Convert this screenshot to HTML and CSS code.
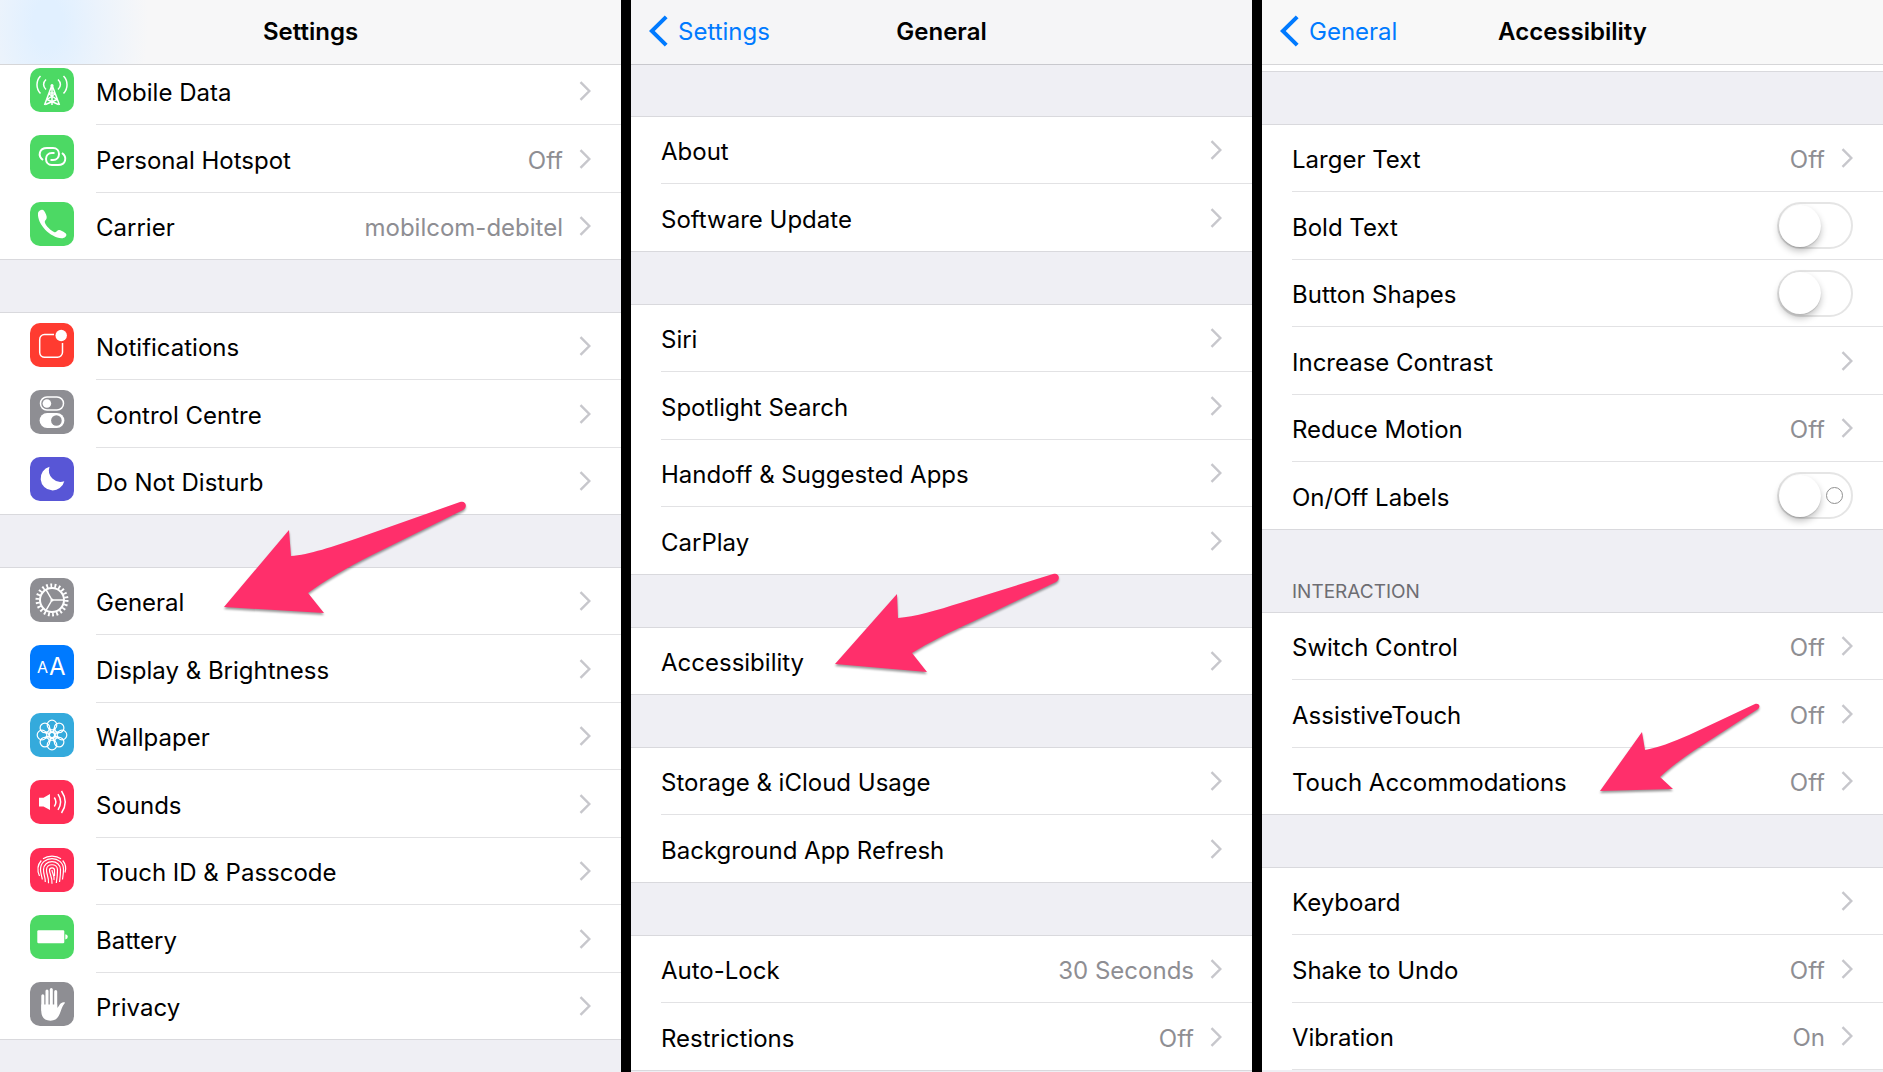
FILE: index.html
```
<!DOCTYPE html>
<html lang="en">
<head>
    <meta charset="utf-8">
    <meta name="viewport" content="width=device-width, initial-scale=1">
    <link rel="stylesheet" href="styles.css">
    <title>Settings</title>
</head>
<body>
    <svg class="defs" aria-hidden="true">
        <symbol id="chevron" viewBox="0 0 12 20"><path d="M1.5 1.2 10.3 10 1.5 18.8" fill="none" stroke="currentColor" stroke-width="2.4"/></symbol>
        <symbol id="back" viewBox="0 0 19 32"><path d="M17.2 1.8 2.8 16 17.2 30.2" fill="none" stroke="currentColor" stroke-width="4"/></symbol>
    </svg>
    <main class="screens">
        <!-- Settings -->
        <section class="screen">
            <header class="bar bar-tint">
                <h1>Settings</h1>
            </header>
            <div class="list scrolled">
                <div class="group">
                    <a class="row" href="#">
                        <svg class="icon green" viewBox="0 0 44 44">
                            <g class="line">
                                <path d="M10.5 8C5.8 13 5.8 20.5 10.5 25.5M16 11.5C12.8 14.5 12.8 18.5 16 21.5M33.5 8C38.2 13 38.2 20.5 33.5 25.5M28 11.5C31.2 14.5 31.2 18.5 28 21.5"/>
                                <path d="M22 17 14.5 37M22 17 29.5 37M22 17V37M19.5 25H24.5M19 26 27 31.5 15.5 36.5M25 26 17 31.5 28.5 36.5"/>
                            </g>
                            <circle class="solid" cx="22" cy="17.5" r="1.5"/>
                        </svg>
                        <span class="body"><span class="label">Mobile Data</span><svg class="chevron"><use href="#chevron"/></svg></span>
                    </a>
                    <a class="row" href="#">
                        <svg class="icon green" viewBox="0 0 44 44">
                            <g class="line thick">
                                <path d="M13 25C7.5 21 9 13 17 13H23C31 13 31 25 23 25H20.5"/>
                                <path d="M32 18C37.500 22 36 30 28 30H22C14 30 14 18 22 18H24.5"/>
                            </g>
                        </svg>
                        <span class="body"><span class="label">Personal Hotspot</span><span class="value">Off</span><svg class="chevron"><use href="#chevron"/></svg></span>
                    </a>
                    <a class="row" href="#">
                        <svg class="icon green" viewBox="0 0 44 44">
                            <path class="solid" d="M8 11C8.500 8.500 12.500 6.500 14 8.800 15.500 11 17 14 16.700 16 16.400 17.800 14.400 18.500 14.800 20.200 15.800 23.800 21 28.800 24.500 30.200 26.300 30.800 26.800 28.200 28.700 28 30.500 28 34.500 30 36 31.800 37.500 34 34.500 36.500 31.500 36.300 20.500 35.500 7 22.500 8 11Z"/>
                        </svg>
                        <span class="body"><span class="label">Carrier</span><span class="value">mobilcom-debitel</span><svg class="chevron"><use href="#chevron"/></svg></span>
                    </a>
                </div>
                <div class="group">
                    <a class="row" href="#">
                        <svg class="icon red" viewBox="0 0 44 44">
                            <path class="line" d="M24 11.5H14.500A5 5 0 0 0 9.700 16.500V29.500A5 5 0 0 0 14.700 34.300H27.500A5 5 0 0 0 32.500 29.300V20"/>
                            <circle class="solid" cx="31.2" cy="12.5" r="5.7"/>
                        </svg>
                        <span class="body"><span class="label">Notifications</span><svg class="chevron"><use href="#chevron"/></svg></span>
                    </a>
                    <a class="row" href="#">
                        <svg class="icon gray" viewBox="0 0 44 44">
                            <rect class="line" x="10.5" y="7" width="23" height="13" rx="6.5"/>
                            <circle class="solid" cx="16.9" cy="13.5" r="4.3"/>
                            <rect class="solid" x="9.6" y="23" width="24.8" height="15" rx="7.5"/>
                            <circle class="hole" cx="26.4" cy="30.5" r="5.3"/>
                        </svg>
                        <span class="body"><span class="label">Control Centre</span><svg class="chevron"><use href="#chevron"/></svg></span>
                    </a>
                    <a class="row" href="#">
                        <svg class="icon purple" viewBox="0 0 44 44">
                            <path class="solid" d="M19.5 9.8A12 12 0 1 0 34.3 24.2 11.5 11.5 0 0 1 19.5 9.8Z"/>
                        </svg>
                        <span class="body"><span class="label">Do Not Disturb</span><svg class="chevron"><use href="#chevron"/></svg></span>
                    </a>
                </div>
                <div class="group">
                    <a class="row" href="#">
                        <svg class="icon gray" viewBox="0 0 44 44">
                            <circle cx="22" cy="22" r="14.5" fill="none" stroke="#fff" stroke-width="4" stroke-dasharray="1.8 2.341"/>
                            <circle class="line thick" cx="22" cy="22" r="12"/>
                            <path class="line" d="M22 22H34M22 22 16 11.6M22 22 16 32.4"/>
                            <circle class="solid" cx="22" cy="22" r="1.6"/>
                        </svg>
                        <span class="body"><span class="label">General</span><svg class="chevron"><use href="#chevron"/></svg></span>
                        <svg class="arrow arrow-general" viewBox="0 0 250 125">
                            <path d="M4 112 69 35 71 61C88 60 115 51 138 43L240 7C246 5 248 12 243 15L150 61C128 72 104 86 88 98L104 118Z"/>
                        </svg>
                    </a>
                    <a class="row" href="#">
                        <svg class="icon blue" viewBox="0 0 44 44">
                            <text x="7" y="28" font-size="16">A</text>
                            <text x="19" y="30" font-size="24">A</text>
                        </svg>
                        <span class="body"><span class="label">Display &amp; Brightness</span><svg class="chevron"><use href="#chevron"/></svg></span>
                    </a>
                    <a class="row" href="#">
                        <svg class="icon sky" viewBox="0 0 44 44">
                            <g class="line thin">
                                <circle cx="22" cy="12" r="4.8"/><circle cx="29.1" cy="14.9" r="4.8"/>
                                <circle cx="32" cy="22" r="4.8"/><circle cx="29.1" cy="29.1" r="4.8"/>
                                <circle cx="22" cy="32" r="4.8"/><circle cx="14.9" cy="29.1" r="4.8"/>
                                <circle cx="12" cy="22" r="4.8"/><circle cx="14.9" cy="14.9" r="4.8"/>
                                <circle cx="22" cy="22" r="2.6"/>
                                <path d="M22 19.4 18.5 15.5M22 19.4 25.5 15.5M23.8 20.2 24.2 15M23.8 20.2 29 19.8M24.6 22 28.5 18.5M24.6 22 28.5 25.5M23.8 23.8 29 24.2M23.8 23.8 24.2 29M22 24.6 25.5 28.5M22 24.6 18.5 28.5M20.2 23.8 19.8 29M20.2 23.8 15 24.2M19.4 22 15.5 25.5M19.4 22 15.5 18.5M20.2 20.2 15 19.8M20.2 20.2 19.8 15"/>
                            </g>
                        </svg>
                        <span class="body"><span class="label">Wallpaper</span><svg class="chevron"><use href="#chevron"/></svg></span>
                    </a>
                    <a class="row" href="#">
                        <svg class="icon pink" viewBox="0 0 44 44">
                            <path class="solid" d="M9 17.8H13.5L20 14V30L13.5 26.5H9Z"/>
                            <path class="line" d="M24.3 17.5Q27.5 22 24.3 26.5M28 14.2Q33.2 22 28 29.8M31.5 11Q39 22 31.5 33"/>
                        </svg>
                        <span class="body"><span class="label">Sounds</span><svg class="chevron"><use href="#chevron"/></svg></span>
                    </a>
                    <a class="row" href="#">
                        <svg class="icon pink" viewBox="0 0 44 44">
                            <g class="line thin">
                                <path d="M13 10.8C18 7.3 26 7.3 31 10.8"/>
                                <path d="M9.5 28C6.800 22 7.8 16.5 11.3 12.5M32.7 12.5C36 16.5 36.5 20 35 24.5"/>
                                <path d="M12.3 31.5C12 28 10.5 26 10.5 21.5 10.5 7 33.5 7 33.5 21.5 33.5 26 32.7 29 32.5 31.5"/>
                                <path d="M15.3 34C15.5 29 13.5 27 13.5 21.8 13.5 11 30.5 11 30.5 21.8 30.5 27 30 30 29.5 34"/>
                                <path d="M18.5 35.3C19 29 16.5 27 16.5 22 16.5 15 27.5 15 27.5 22 27.5 27 27 31 26.3 35"/>
                                <path d="M22 35.8C22.5 29 19.5 26 19.5 22.2 19.5 19 24.5 19 24.5 22.2V28"/>
                                <path d="M22 22C22 25 25 28 24 32"/>
                            </g>
                        </svg>
                        <span class="body"><span class="label">Touch ID &amp; Passcode</span><svg class="chevron"><use href="#chevron"/></svg></span>
                    </a>
                    <a class="row" href="#">
                        <svg class="icon green" viewBox="0 0 44 44">
                            <rect class="solid" x="7.3" y="15.3" width="27" height="13" rx="1.2"/>
                            <path class="solid" d="M35.3 19.2Q37.8 19.5 37.8 21.8T35.3 24.4Z"/>
                        </svg>
                        <span class="body"><span class="label">Battery</span><svg class="chevron"><use href="#chevron"/></svg></span>
                    </a>
                    <a class="row" href="#">
                        <svg class="icon gray" viewBox="0 0 44 44">
                            <path d="M12.8 13.8V28M17 9V26M21.3 7.5V26M25.7 9.4V26" fill="none" stroke="#fff" stroke-width="3" stroke-linecap="round"/>
                            <path class="solid" d="M11.3 22.5H27.2V25.8C28.5 25.5 29 22.5 31 21.2 32.5 20.2 34.5 20 35 20.8 34 22.5 32.5 24 31.5 27 29.5 33 27.5 38.7 20.5 38.7 14 38.7 11.3 34.5 11.3 29Z"/>
                        </svg>
                        <span class="body"><span class="label">Privacy</span><svg class="chevron"><use href="#chevron"/></svg></span>
                    </a>
                </div>
            </div>
        </section>

        <!-- General -->
        <section class="screen">
            <header class="bar bar-plain">
                <a class="back" href="#"><svg><use href="#back"/></svg><span>Settings</span></a>
                <h1>General</h1>
            </header>
            <div class="list spaced">
                <div class="group">
                    <a class="row" href="#"><span class="body"><span class="label">About</span><svg class="chevron"><use href="#chevron"/></svg></span></a>
                    <a class="row" href="#"><span class="body"><span class="label">Software Update</span><svg class="chevron"><use href="#chevron"/></svg></span></a>
                </div>
                <div class="group">
                    <a class="row" href="#"><span class="body"><span class="label">Siri</span><svg class="chevron"><use href="#chevron"/></svg></span></a>
                    <a class="row" href="#"><span class="body"><span class="label">Spotlight Search</span><svg class="chevron"><use href="#chevron"/></svg></span></a>
                    <a class="row" href="#"><span class="body"><span class="label">Handoff &amp; Suggested Apps</span><svg class="chevron"><use href="#chevron"/></svg></span></a>
                    <a class="row" href="#"><span class="body"><span class="label">CarPlay</span><svg class="chevron"><use href="#chevron"/></svg></span></a>
                </div>
                <div class="group">
                    <a class="row" href="#">
                        <span class="body"><span class="label">Accessibility</span><svg class="chevron"><use href="#chevron"/></svg></span>
                        <svg class="arrow arrow-access" viewBox="0 0 235 110">
                            <path d="M5 94 67 24 68 48C84 47 108 40 130 33L223 4C229 2 231 9 226 12L142 52C120 62 98 73 82 83L97 102Z"/>
                        </svg>
                    </a>
                </div>
                <div class="group">
                    <a class="row" href="#"><span class="body"><span class="label">Storage &amp; iCloud Usage</span><svg class="chevron"><use href="#chevron"/></svg></span></a>
                    <a class="row" href="#"><span class="body"><span class="label">Background App Refresh</span><svg class="chevron"><use href="#chevron"/></svg></span></a>
                </div>
                <div class="group">
                    <a class="row" href="#"><span class="body"><span class="label">Auto-Lock</span><span class="value">30 Seconds</span><svg class="chevron"><use href="#chevron"/></svg></span></a>
                    <a class="row" href="#"><span class="body"><span class="label">Restrictions</span><span class="value">Off</span><svg class="chevron"><use href="#chevron"/></svg></span></a>
                </div>
            </div>
        </section>

        <!-- Accessibility -->
        <section class="screen">
            <header class="bar">
                <a class="back" href="#"><svg><use href="#back"/></svg><span>General</span></a>
                <h1>Accessibility</h1>
            </header>
            <div class="list">
                <div class="group-tail"></div>
                <div class="group">
                    <a class="row" href="#"><span class="body"><span class="label">Larger Text</span><span class="value">Off</span><svg class="chevron"><use href="#chevron"/></svg></span></a>
                    <div class="row"><div class="body"><label class="label" for="bold">Bold Text</label><input class="switch" type="checkbox" id="bold"></div></div>
                    <div class="row"><div class="body"><label class="label" for="shapes">Button Shapes</label><input class="switch" type="checkbox" id="shapes"></div></div>
                    <a class="row" href="#"><span class="body"><span class="label">Increase Contrast</span><svg class="chevron"><use href="#chevron"/></svg></span></a>
                    <a class="row" href="#"><span class="body"><span class="label">Reduce Motion</span><span class="value">Off</span><svg class="chevron"><use href="#chevron"/></svg></span></a>
                    <div class="row"><div class="body"><label class="label" for="labels">On/Off Labels</label><input class="switch switch-labelled" type="checkbox" id="labels"></div></div>
                </div>
                <div class="section">
                    <h2>INTERACTION</h2>
                    <div class="group">
                        <a class="row" href="#"><span class="body"><span class="label">Switch Control</span><span class="value">Off</span><svg class="chevron"><use href="#chevron"/></svg></span></a>
                        <a class="row" href="#"><span class="body"><span class="label">AssistiveTouch</span><span class="value">Off</span><svg class="chevron"><use href="#chevron"/></svg></span></a>
                        <a class="row" href="#">
                            <span class="body"><span class="label">Touch Accommodations</span><span class="value">Off</span><svg class="chevron"><use href="#chevron"/></svg></span>
                            <svg class="arrow arrow-touch" viewBox="0 0 170 100">
                                <path d="M5 93 47 34 50 52C62 50 78 44 94 37L160 6C164 5 166 8 163 11L106 48C90 58 76 69 65 79L78 91Z"/>
                            </svg>
                        </a>
                    </div>
                </div>
                <div class="group open">
                    <a class="row" href="#"><span class="body"><span class="label">Keyboard</span><svg class="chevron"><use href="#chevron"/></svg></span></a>
                    <a class="row" href="#"><span class="body"><span class="label">Shake to Undo</span><span class="value">Off</span><svg class="chevron"><use href="#chevron"/></svg></span></a>
                    <a class="row" href="#"><span class="body"><span class="label">Vibration</span><span class="value">On</span><svg class="chevron"><use href="#chevron"/></svg></span></a>
                </div>
            </div>
        </section>
    </main>
</body>
</html>
```

FILE: styles.css
```
* { margin: 0; padding: 0; box-sizing: border-box; }
body { background: black; color: black; font-family: Inter, "Liberation Sans", sans-serif; font-size: 24px; line-height: 32px; }
a { color: inherit; text-decoration: none; }
.defs { display: none; }

.screens { display: grid; grid-template-columns: repeat(3, minmax(0, 1fr)); gap: 10px; height: 100vh; overflow: hidden; }
.screen { background: #efeff4; overflow: hidden; }

/* navigation bar */
.bar { display: grid; grid-template-columns: 1fr auto 1fr; align-items: center; height: 65px; padding: 0 18px 2px; background: #f8f8f8; border-bottom: 1px solid #d6d6d8; position: relative; z-index: 2; }
.bar-tint { background: radial-gradient(ellipse 100px 160px at 48px 24px, #e1f0ff 15%, #ebf3fc 50%, #f7f7f8 100%); }
.bar-plain { background: #f5f5f7; border-color: #c8c8cd; }
.bar h1 { grid-column: 2; padding-top: 2px; font-size: 24px; font-weight: 600; }
.back { display: flex; align-items: center; gap: 10px; color: #007aff; }
.back svg { width: 19px; height: 32px; }
.back span { padding-top: 2px; }

/* grouped lists */
.list { display: flex; flex-direction: column; gap: 52px; }
.scrolled { margin-top: -8px; }
.spaced { padding-top: 51px; }
.group { background: white; border-top: 1px solid #d9d9dd; }
.group-tail { height: 7px; background: white; border-bottom: 1px solid #d9d9dd; }
.section h2 { padding: 0 30px 10px; color: #6d6d72; font-size: 19px; font-weight: 400; line-height: 20px; }
.row { display: flex; align-items: center; height: 67px; padding-left: 30px; position: relative; }
.row:nth-child(even) { height: 68px; }
.row:last-child { border-bottom: 1px solid #d9d9dd; }
.body { flex: 1; display: flex; align-items: center; align-self: stretch; padding-right: 30px; border-bottom: 1px solid #e2e2e4; }
.row:last-child .body { border-bottom: 0; }
.open .row:last-child { border-bottom: 0; }
.open .row:last-child .body { border-bottom: 1px solid #e2e2e4; }
.label { flex: 1; padding-top: 4px; white-space: nowrap; }
.value { padding-top: 4px; color: #8e8e93; white-space: nowrap; }
.chevron { width: 12px; height: 20px; margin-left: 16px; color: #c7c7cc; }

/* icons */
.icon { width: 44px; height: 44px; margin: 0 22px 4px 0; border-radius: 10px; }
.icon text { fill: white; font-family: Inter, sans-serif; }
.line { fill: none; stroke: white; stroke-width: 1.5; }
.thick { stroke-width: 2; }
.thin { stroke-width: 1.2; }
.solid { fill: white; }
.hole { fill: #8e8e93; }
.green { background: #4cd964; }
.red { background: #ff3b30; }
.gray { background: #8e8e93; }
.purple { background: #5856d6; }
.blue { background: #007aff; }
.sky { background: #34aadc; }
.pink { background: #ff2d55; }

/* switches */
.switch { appearance: none; width: 76px; height: 47px; border: 2px solid #e5e5e5; border-radius: 24px; background: white; display: flex; align-items: center; justify-content: space-between; padding-right: 8px; }
.switch::before { content: ""; width: 42px; height: 42px; border-radius: 50%; background: white; box-shadow: 0 4px 7px rgba(0, 0, 0, 0.24), 0 1px 1px rgba(0, 0, 0, 0.12); }
.switch:checked { background: #4cd964; flex-direction: row-reverse; padding-right: 0; }
.switch-labelled::after { content: ""; width: 15px; height: 15px; border: 1px solid #909090; border-radius: 50%; }

/* arrows over the rows */
.arrow { position: absolute; z-index: 1; fill: #ff2f6b; filter: drop-shadow(0 2px 1px rgba(0, 0, 0, 0.4)); pointer-events: none; }
.arrow-general { width: 250px; height: 125px; left: 220px; top: -73px; }
.arrow-access { width: 235px; height: 110px; left: 199px; top: -58px; }
.arrow-touch { width: 170px; height: 100px; left: 333px; top: -50px; }
```
